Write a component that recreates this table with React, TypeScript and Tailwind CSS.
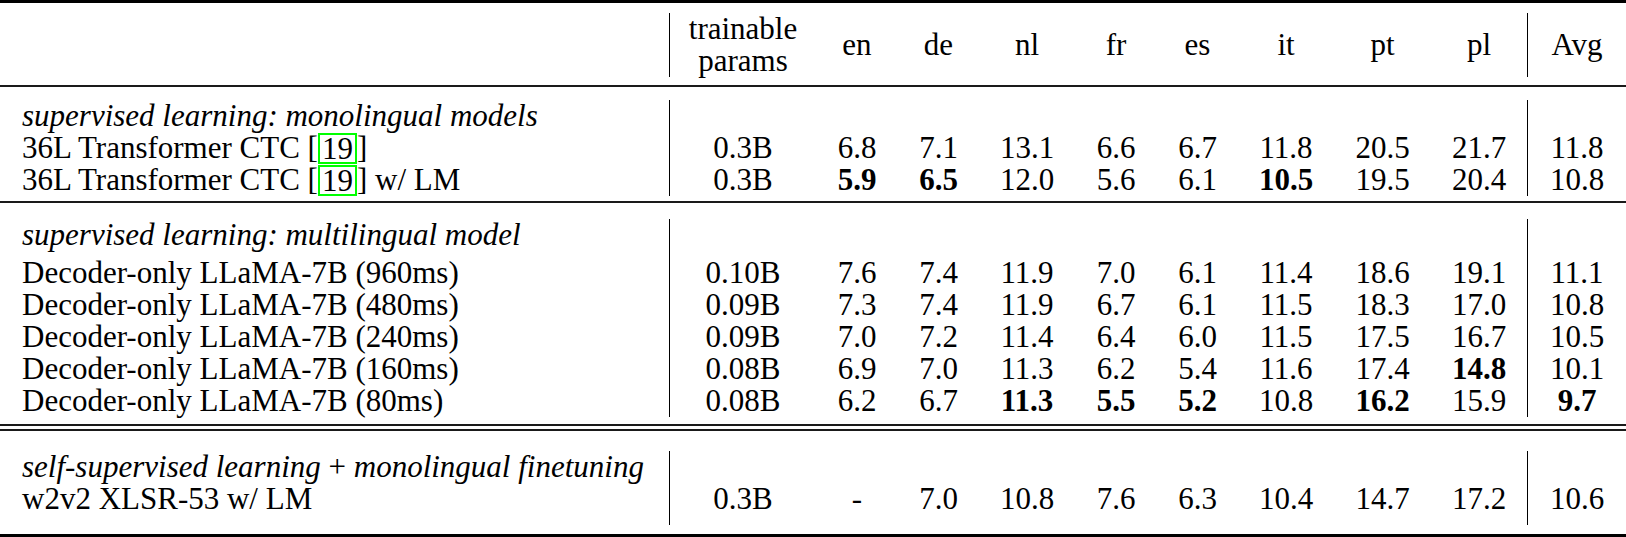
import React from "react";

type Cell = { v: string; b?: boolean };
type Row = { label: React.ReactNode; cells?: Cell[]; italic?: boolean; h?: string };

const c = (s: string): Cell => (s.startsWith("*") ? { v: s.slice(1), b: true } : { v: s });
const mk = (arr: string[]) => arr.map(c);

const Ref = () => (
  <span className="inline-block border-2 border-[#00ff00] h-[31px] leading-[27px] px-[2px]">19</span>
);

const sec1: Row[] = [
  { label: "supervised learning: monolingual models", italic: true },
  {
    label: (
      <>
        <span>36L Transformer CTC [</span>
        <Ref />
        <span>]</span>
      </>
    ),
    cells: mk(["0.3B", "6.8", "7.1", "13.1", "6.6", "6.7", "11.8", "20.5", "21.7", "11.8"]),
  },
  {
    label: (
      <>
        <span>36L Transformer CTC [</span>
        <Ref />
        <span>] w/ LM</span>
      </>
    ),
    cells: mk(["0.3B", "*5.9", "*6.5", "12.0", "5.6", "6.1", "*10.5", "19.5", "20.4", "10.8"]),
  },
];

const sec2: Row[] = [
  { label: "supervised learning: multilingual model", italic: true, h: "h-[38px]" },
  { label: "Decoder-only LLaMA-7B (960ms)", cells: mk(["0.10B", "7.6", "7.4", "11.9", "7.0", "6.1", "11.4", "18.6", "19.1", "11.1"]) },
  { label: "Decoder-only LLaMA-7B (480ms)", cells: mk(["0.09B", "7.3", "7.4", "11.9", "6.7", "6.1", "11.5", "18.3", "17.0", "10.8"]) },
  { label: "Decoder-only LLaMA-7B (240ms)", cells: mk(["0.09B", "7.0", "7.2", "11.4", "6.4", "6.0", "11.5", "17.5", "16.7", "10.5"]) },
  { label: "Decoder-only LLaMA-7B (160ms)", cells: mk(["0.08B", "6.9", "7.0", "11.3", "6.2", "5.4", "11.6", "17.4", "*14.8", "10.1"]) },
  { label: "Decoder-only LLaMA-7B (80ms)", cells: mk(["0.08B", "6.2", "6.7", "*11.3", "*5.5", "*5.2", "10.8", "*16.2", "15.9", "*9.7"]) },
];

const sec3: Row[] = [
  {
    label: (
      <span>
        <i>self-supervised learning</i> + <i>monolingual finetuning</i>
      </span>
    ),
  },
  { label: "w2v2 XLSR-53 w/ LM", cells: mk(["0.3B", "-", "7.0", "10.8", "7.6", "6.3", "10.4", "14.7", "17.2", "10.6"]) },
];

const GRID =
  "grid grid-cols-[669px_147px_82px_81px_96px_82px_81px_96px_97px_96px_99px]";

function cellClass(i: number) {
  if (i === 0 || i === 9) return "border-l border-black text-center";
  return "text-center";
}

function Section({ rows, extra }: { rows: Row[]; extra?: string }) {
  return (
    <div className={GRID}>
      {rows.map((r, ri) => {
        const h = r.h ?? "h-[32px]";
        return (
          <React.Fragment key={ri}>
            <div className={`${h} leading-[32px] flex items-start pl-[22px] whitespace-pre ${r.italic ? "italic" : ""}`}>
              <div className="h-[32px] flex items-center">{r.label}</div>
            </div>
            {Array.from({ length: 10 }).map((_, i) => {
              const cell = r.cells ? r.cells[i] : undefined;
              return (
                <div key={i} className={`${h} leading-[32px] ${cellClass(i)} ${cell?.b ? "font-bold" : ""}`}>
                  {cell ? cell.v : ""}
                </div>
              );
            })}
          </React.Fragment>
        );
      })}
      {extra ? (
        <>
          <div className={extra} />
          {Array.from({ length: 10 }).map((_, i) => (
            <div key={i} className={`${extra} ${cellClass(i)}`} />
          ))}
        </>
      ) : null}
    </div>
  );
}

export default function App() {
  const headers = ["en", "de", "nl", "fr", "es", "it", "pt", "pl"];
  return (
    <div className="w-[1626px] h-[537px] overflow-hidden bg-white text-black font-['Liberation_Serif',serif] text-[31px]">
      <div className="h-[3px] bg-black" />
      <div className={`${GRID} mt-[10px]`}>
        <div className="h-[64px]" />
        <div className="h-[64px] border-l border-black text-center leading-[32px]">
          <div>trainable</div>
          <div>params</div>
        </div>
        {headers.map((hd) => (
          <div key={hd} className="h-[64px] flex items-center justify-center">
            {hd}
          </div>
        ))}
        <div className="h-[64px] border-l border-black flex items-center justify-center">Avg</div>
      </div>
      <div className="h-[2px] bg-[#1a1a1a] mt-[8px]" />
      <div className="mt-[13px]">
        <Section rows={sec1} />
      </div>
      <div className="h-[2px] bg-[#1a1a1a] mt-[5px]" />
      <div className="mt-[16px]">
        <Section rows={sec2} />
      </div>
      <div className="h-[2px] bg-[#1a1a1a] mt-[7px]" />
      <div className="h-[2px] bg-[#1a1a1a] mt-[3px]" />
      <div className="mt-[20px]">
        <Section rows={sec3} extra="h-[10px]" />
      </div>
      <div className="h-[4px] bg-black mt-[9px]" />
    </div>
  );
}
